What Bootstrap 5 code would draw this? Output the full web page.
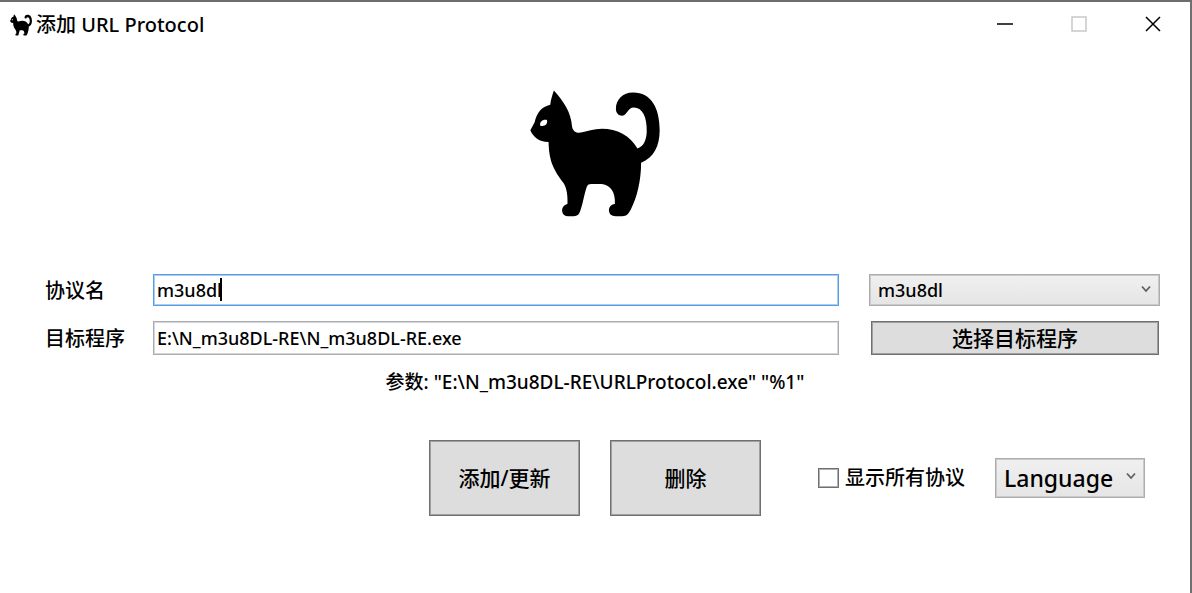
<!DOCTYPE html>
<html lang="zh-CN">
<head>
<meta charset="utf-8">
<meta name="viewport" content="width=device-width, initial-scale=1">
<title>添加 URL Protocol</title>
<link rel="stylesheet" href="https://cdn.jsdelivr.net/npm/bootstrap@5.3.0/dist/css/bootstrap.min.css">
<style>
  body { font-family: "Noto Sans", "Noto Sans CJK SC", sans-serif; font-size: 18px; font-weight: 500; line-height: 24px; color: #000; background: #fff; }
  .app-window { border-top: 2px solid #6b6e6b; border-right: 2px solid #707070; }
  .title-bar { height: 46px; padding-left: 10px; }
  .title-text { font-size: 20px; }
  .title-cat { width: 22px; height: 22px; }
  .win-btn { width: 74px; height: 44px; border: 0; background: none; padding: 0; }
  .hero-cat { width: 130px; height: 127px; }
  .hero { padding-top: 42px; padding-bottom: 57px; }
  .fields { display: grid; grid-template-columns: 108px 1fr 291px; row-gap: 15px; padding: 0 30px 0 45px; align-items: center; }
  .field-box { margin-right: 30px; }
  .field-label, .check-label { font-size: 20px; }
  .field-label { padding-top: 2px; }
  .tool-input, .tool-select, .tool-btn { border-radius: 0; color: #000; font-weight: 500; line-height: 24px; }
  .tool-input { border: 1px solid #abadb3; box-shadow: inset 0 0 0 1px #d5d6d9; padding: 3px; height: 34px; font-size: 18px; }
  .tool-input.active-input, .tool-input:focus { border-color: #569de5; box-shadow: inset 0 0 0 1px #aacef2; }
  .tool-input.active-input { height: 32px; }
  .caret-bar { left: 67px; top: 4px; width: 2px; height: 23px; background: #000; }
  .tool-btn { border: 1px solid #707070; box-shadow: inset 0 0 0 1px #a0a0a0; background: #ddd; padding: 0; font-size: 21px; }
  .tool-btn:hover { background: #bee6fd; border-color: #3c7fb1; }
  .pick-btn { height: 34px; margin: 0 1px 0 2px; }
  .tool-select { border: 1px solid #acacac; box-shadow: inset 0 0 0 1px #cacaca; padding: 0 28px 0 8px; background-color: #eaeaea;
    background-image: url("data:image/svg+xml,%3Csvg xmlns='http://www.w3.org/2000/svg' viewBox='0 0 10 8'%3E%3Cpath d='M1 1.5 5 6 9 1.5' fill='none' stroke='%23606060' stroke-width='1.8'/%3E%3C/svg%3E"), linear-gradient(#f0f0f0, #e5e5e5);
    background-size: 10px 8px, 100% 100%; background-position: right 8px top 10px, 0 0; background-repeat: no-repeat; }
  .proto-select { height: 32px; font-size: 18px; }
  .lang-select { width: 150px; height: 40px; font-size: 23px; line-height: 32px; background-position: right 8px top 13px, 0 0; }
  .params { padding: 15px 0 0; font-size: 19px; }
  .actions { padding: 46px 45px 76px; }
  .big-btn { width: 151px; height: 76px; }
  .tool-check { width: 21px; height: 20px; border: 1px solid #707070; box-shadow: inset 0 0 0 1px #b0b0b0; }
  .tool-check[type=checkbox] { border-radius: 0; }
  .gap-btn { margin-left: 30px; }
  .gap-check { margin-left: 57px; }
  .check-row { gap: 6px; }
</style>
</head>
<body>
<svg width="0" height="0" class="position-absolute" aria-hidden="true">
  <symbol id="cat" viewBox="59 29 392 380">
    <path fill-rule="evenodd" d="M131 29 C126 43 122 57 120 72 C94 78 80 95 73 125 L60 149 C69 169 84 184 115 184 C116 244 132 270 160 308 C170 324 173 345 172 371 C159 374 155 384 156 393 C157 403 164 408 175 408 L191 408 C203 408 207 402 211 391 C219 368 222 342 230 320 C233 313 237 311 244 311 L276 311 C302 314 317 336 315 371 C302 373 297 381 297 391 C298 402 305 408 317 408 L337 408 C351 408 356 401 363 388 C382 350 394 301 394 247 C432 232 450 197 450 149 C450 83 425 35 370 35 C338 35 318 57 318 84 C318 97 326 105 337 105 C353 103 353 80 372 80 C399 80 412 110 411 153 C410 180 401 199 383 204 C361 164 321 144 276 144 C251 145 230 151 213 156 C200 158 189 153 186 139 C183 93 158 59 131 29 Z M90 135 C87 123 98 115 110 118 C114 130 103 139 90 135 Z"/>
  </symbol>
</svg>
<div class="app-window min-vh-100">
  <header class="title-bar d-flex align-items-center justify-content-between">
    <div class="d-flex align-items-center">
      <svg class="title-cat me-1" aria-hidden="true"><use href="#cat"/></svg>
      <span class="title-text">添加 URL Protocol</span>
    </div>
    <div class="d-flex align-self-start">
      <button type="button" class="win-btn" aria-label="最小化"><svg class="d-block mx-auto" width="16" height="16"><path d="M0 8H16" stroke="#000" stroke-width="1.5"/></svg></button>
      <button type="button" class="win-btn" aria-label="最大化" disabled><svg class="d-block mx-auto" width="16" height="16"><path d="M1 1H15V15H1Z" fill="none" stroke="#c8c8c8" stroke-width="1.5"/></svg></button>
      <button type="button" class="win-btn" aria-label="关闭"><svg class="d-block mx-auto" width="16" height="16"><path d="M1 1 15 15M15 1 1 15" stroke="#000" stroke-width="1.5"/></svg></button>
    </div>
  </header>
  <main>
    <div class="hero d-flex justify-content-center"><svg class="hero-cat" role="img" aria-label="黑猫"><use href="#cat"/></svg></div>
    <div class="fields">
      <label class="field-label" for="proto">协议名</label>
      <div class="field-box position-relative">
        <input id="proto" type="text" class="form-control tool-input active-input" value="m3u8dl">
        <span class="caret-bar position-absolute"></span>
      </div>
      <select class="form-select tool-select proto-select" aria-label="协议"><option>m3u8dl</option></select>
      <label class="field-label" for="target">目标程序</label>
      <div class="field-box"><input id="target" type="text" class="form-control tool-input" value="E:\N_m3u8DL-RE\N_m3u8DL-RE.exe"></div>
      <button type="button" class="btn tool-btn pick-btn">选择目标程序</button>
    </div>
    <div class="params text-center">参数: "E:\N_m3u8DL-RE\URLProtocol.exe" "%1"</div>
    <div class="actions d-flex align-items-center justify-content-end">
      <button type="button" class="btn tool-btn big-btn">添加/更新</button>
      <button type="button" class="btn tool-btn big-btn gap-btn">删除</button>
      <div class="check-row d-flex align-items-center gap-check">
        <input id="all" type="checkbox" class="form-check-input tool-check m-0">
        <label class="check-label" for="all">显示所有协议</label>
      </div>
      <select class="form-select tool-select lang-select gap-btn" aria-label="Language"><option>Language</option></select>
    </div>
  </main>
</div>
<script src="https://cdn.jsdelivr.net/npm/bootstrap@5.3.0/dist/js/bootstrap.bundle.min.js"></script>
</body>
</html>
